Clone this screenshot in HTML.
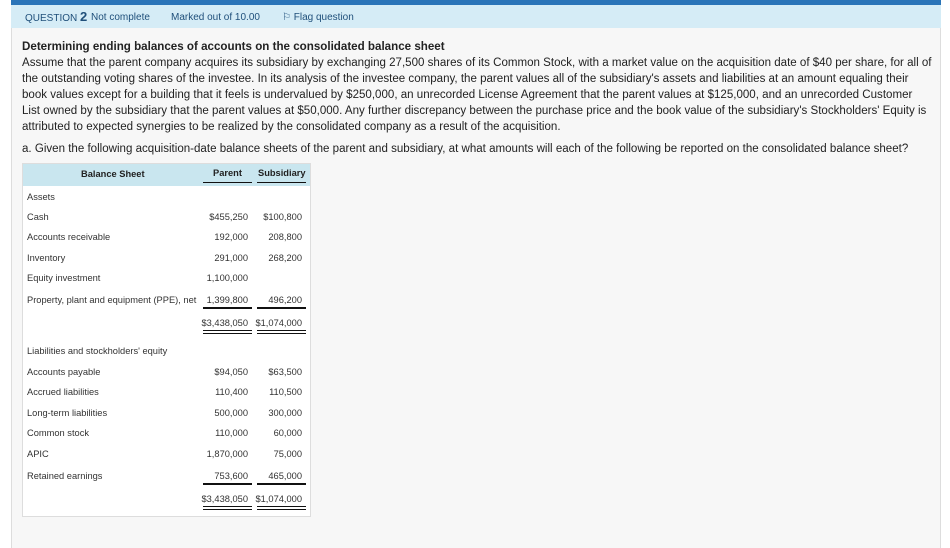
<!DOCTYPE html>
<html><head><meta charset="utf-8"><style>
*{margin:0;padding:0;box-sizing:border-box}
body{width:950px;height:548px;background:#fff;font-family:"Liberation Sans",sans-serif;color:#333;position:relative;overflow:hidden}
.top{position:absolute;left:11px;top:0;width:930px;height:5px;background:#2a74b8}
.hdr{position:absolute;left:11px;top:5px;width:930px;height:23px;background:#d5ecf6;font-size:10px;color:#1f4f7a}
.hdr span{position:absolute;top:7px;line-height:12px}
.box{position:absolute;left:11px;top:28px;width:930px;height:520px;background:#f7f7f7;border-left:1px solid #ddd;border-right:1px solid #ddd}
.txt{position:absolute;left:22px;top:39px;width:925px;font-size:11.55px;line-height:16px;color:#222;white-space:nowrap}
.txt b{font-size:11.6px}
.tbl{position:absolute;left:22px;top:163px;width:289px;height:354px;background:#fff;border:1px solid #ddd;font-size:9.3px;color:#333}
.th{position:absolute;left:0;top:0;width:287px;height:22px;background:#c9e6ef;font-weight:bold;color:#222}
.r{position:absolute;left:4px;height:12px}
.p{position:absolute;right:59px;text-align:right}
.s{position:absolute;right:5px;text-align:right}
.ln{position:absolute;height:2px;background:#111}
.dl{position:absolute;height:4px;border-top:1px solid #111;border-bottom:1px solid #111}
</style></head><body>
<div class="top"></div>
<div class="hdr"><span style="left:14px;top:3px;line-height:18px">QUESTION <b style="font-size:13px">2</b></span><span style="left:80px">Not complete</span><span style="left:160px">Marked out of 10.00</span><span style="left:271px">⚐ Flag question</span></div>
<div class="box"></div>
<div class="txt"><b>Determining ending balances of accounts on the consolidated balance sheet</b><br>Assume that the parent company acquires its subsidiary by exchanging 27,500 shares of its Common Stock, with a market value on the acquisition date of $40 per share, for all of<br>the outstanding voting shares of the investee. In its analysis of the investee company, the parent values all of the subsidiary's assets and liabilities at an amount equaling their<br>book values except for a building that it feels is undervalued by $250,000, an unrecorded License Agreement that the parent values at $125,000, and an unrecorded Customer<br>List owned by the subsidiary that the parent values at $50,000. Any further discrepancy between the purchase price and the book value of the subsidiary's Stockholders' Equity is<br>attributed to expected synergies to be realized by the consolidated company as a result of the acquisition.<div style="margin-top:6px">a. Given the following acquisition-date balance sheets of the parent and subsidiary, at what amounts will each of the following be reported on the consolidated balance sheet?</div></div>
<div class="tbl">
<div class="th"><span style="position:absolute;left:58px;top:5px">Balance Sheet</span><span style="position:absolute;left:190px;top:4px">Parent</span><span style="position:absolute;left:235px;top:4px">Subsidiary</span></div>
<div class="ln" style="left:180px;top:18px;width:49px;height:1px"></div>
<div class="ln" style="left:234px;top:18px;width:49px;height:1px"></div>
<div class="r" style="top:28px">Assets</div>
<div class="r" style="top:48px;width:280px">Cash<span class="p">$455,250</span><span class="s">$100,800</span></div>
<div class="r" style="top:68px;width:280px">Accounts receivable<span class="p">192,000</span><span class="s">208,800</span></div>
<div class="r" style="top:89px;width:280px">Inventory<span class="p">291,000</span><span class="s">268,200</span></div>
<div class="r" style="top:109px;width:280px">Equity investment<span class="p">1,100,000</span></div>
<div class="r" style="top:131px;width:280px">Property, plant and equipment (PPE), net<span class="p">1,399,800</span><span class="s">496,200</span></div>
<div class="ln" style="left:180px;top:143px;width:49px"></div>
<div class="ln" style="left:234px;top:143px;width:49px"></div>
<div class="r" style="top:154px;width:280px"><span class="p">$3,438,050</span><span class="s">$1,074,000</span></div>
<div class="dl" style="left:180px;top:166px;width:49px"></div>
<div class="dl" style="left:234px;top:166px;width:49px"></div>
<div class="r" style="top:182px">Liabilities and stockholders' equity</div>
<div class="r" style="top:203px;width:280px">Accounts payable<span class="p">$94,050</span><span class="s">$63,500</span></div>
<div class="r" style="top:223px;width:280px">Accrued liabilities<span class="p">110,400</span><span class="s">110,500</span></div>
<div class="r" style="top:244px;width:280px">Long-term liabilities<span class="p">500,000</span><span class="s">300,000</span></div>
<div class="r" style="top:264px;width:280px">Common stock<span class="p">110,000</span><span class="s">60,000</span></div>
<div class="r" style="top:285px;width:280px">APIC<span class="p">1,870,000</span><span class="s">75,000</span></div>
<div class="r" style="top:307px;width:280px">Retained earnings<span class="p">753,600</span><span class="s">465,000</span></div>
<div class="ln" style="left:180px;top:319px;width:49px"></div>
<div class="ln" style="left:234px;top:319px;width:49px"></div>
<div class="r" style="top:330px;width:280px"><span class="p">$3,438,050</span><span class="s">$1,074,000</span></div>
<div class="dl" style="left:180px;top:342px;width:49px"></div>
<div class="dl" style="left:234px;top:342px;width:49px"></div>
</div>
</body></html>
